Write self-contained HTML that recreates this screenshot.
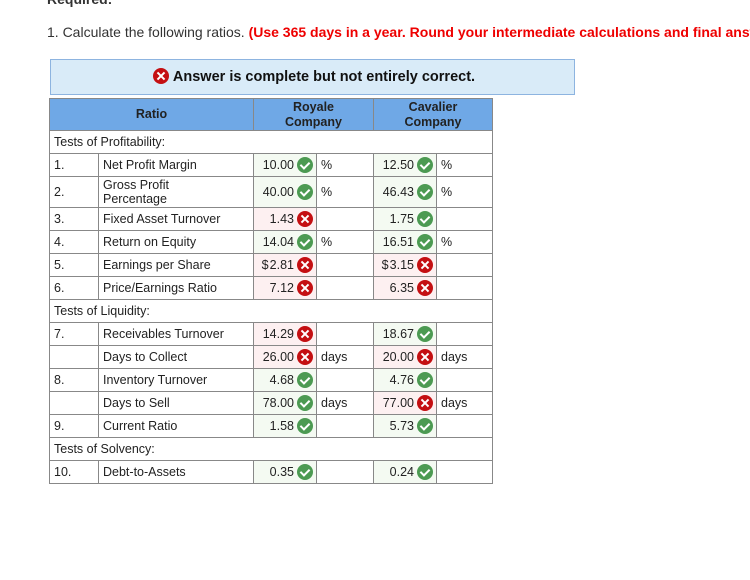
<!DOCTYPE html><html><head><style>
body{margin:0;width:750px;height:580px;background:#fff;font-family:"Liberation Sans",Arial,sans-serif;position:relative;overflow:hidden;color:#222}
.req{position:absolute;left:47px;top:-9px;font-weight:bold;font-size:14px;color:#333}
.q{position:absolute;left:47px;top:24px;font-size:14px;white-space:nowrap;color:#333}
.q b{color:#e00}
.box{position:absolute;left:50px;top:59px;width:523px;height:34px;background:#d9ebf8;border:1px solid #8db4e0;text-align:center;font-weight:bold;font-size:14.5px;line-height:34px;color:#111}
table{position:absolute;left:49px;top:98px;border-collapse:collapse;font-size:12.5px}
td{border:1px solid #888;padding:0 4px;height:22px;white-space:nowrap}
th{background:#6fa8e6;border:1px solid #888;font-weight:bold;font-size:12.5px;height:31px;padding:0;color:#222;line-height:15px}
.v{text-align:right;padding:0 3px 0 2px}
.g{background:#f4faf2}.r{background:#fdf0f1}
.i{display:inline-block;width:16px;height:16px;border-radius:50%;vertical-align:-4px;margin-left:3px;position:relative}
.ok{background:#4c9a52}.no{background:#c40f12}
.ok:after{content:"";position:absolute;left:5px;top:3px;width:4px;height:7px;border:solid #fff;border-width:0 2px 2px 0;transform:rotate(45deg)}
.no:before,.no:after{content:"";position:absolute;left:7px;top:3px;width:2px;height:10px;background:#fff;transform:rotate(45deg)}
.no:after{transform:rotate(-45deg)}
</style></head><body>
<div class="req">Required:</div>
<div class="q">1. Calculate the following ratios. <b>(Use 365 days in a year. Round your intermediate calculations and final answers</b></div>
<div class="box"><span class="i no" style="vertical-align:-3px;margin-right:4px"></span>Answer is complete but not entirely correct.</div>
<table>
<tr><th colspan="2">Ratio</th><th colspan="2">Royale<br>Company</th><th colspan="2">Cavalier<br>Company</th></tr>
<tr><td colspan="6">Tests of Profitability:</td></tr>
<tr><td style="width:40px">1.</td><td style="width:146px">Net Profit Margin</td><td class="v g" style="width:57px">10.00<span class="i ok"></span></td><td style="width:48px">%</td><td class="v g" style="width:57px">12.50<span class="i ok"></span></td><td style="width:47px">%</td></tr>
<tr><td>2.</td><td style="height:30px;line-height:14px">Gross Profit<br>Percentage</td><td class="v g">40.00<span class="i ok"></span></td><td>%</td><td class="v g">46.43<span class="i ok"></span></td><td>%</td></tr>
<tr><td>3.</td><td>Fixed Asset Turnover</td><td class="v r">1.43<span class="i no"></span></td><td></td><td class="v g">1.75<span class="i ok"></span></td><td></td></tr>
<tr><td>4.</td><td>Return on Equity</td><td class="v g">14.04<span class="i ok"></span></td><td>%</td><td class="v g">16.51<span class="i ok"></span></td><td>%</td></tr>
<tr><td>5.</td><td>Earnings per Share</td><td class="v r">$&#8202;2.81<span class="i no"></span></td><td></td><td class="v r">$&#8202;3.15<span class="i no"></span></td><td></td></tr>
<tr><td>6.</td><td>Price/Earnings Ratio</td><td class="v r">7.12<span class="i no"></span></td><td></td><td class="v r">6.35<span class="i no"></span></td><td></td></tr>
<tr><td colspan="6">Tests of Liquidity:</td></tr>
<tr><td>7.</td><td>Receivables Turnover</td><td class="v r">14.29<span class="i no"></span></td><td></td><td class="v g">18.67<span class="i ok"></span></td><td></td></tr>
<tr><td></td><td>Days to Collect</td><td class="v r">26.00<span class="i no"></span></td><td>days</td><td class="v r">20.00<span class="i no"></span></td><td>days</td></tr>
<tr><td>8.</td><td>Inventory Turnover</td><td class="v g">4.68<span class="i ok"></span></td><td></td><td class="v g">4.76<span class="i ok"></span></td><td></td></tr>
<tr><td></td><td>Days to Sell</td><td class="v g">78.00<span class="i ok"></span></td><td>days</td><td class="v r">77.00<span class="i no"></span></td><td>days</td></tr>
<tr><td>9.</td><td>Current Ratio</td><td class="v g">1.58<span class="i ok"></span></td><td></td><td class="v g">5.73<span class="i ok"></span></td><td></td></tr>
<tr><td colspan="6">Tests of Solvency:</td></tr>
<tr><td>10.</td><td>Debt-to-Assets</td><td class="v g">0.35<span class="i ok"></span></td><td></td><td class="v g">0.24<span class="i ok"></span></td><td></td></tr>
</table>
</body></html>
